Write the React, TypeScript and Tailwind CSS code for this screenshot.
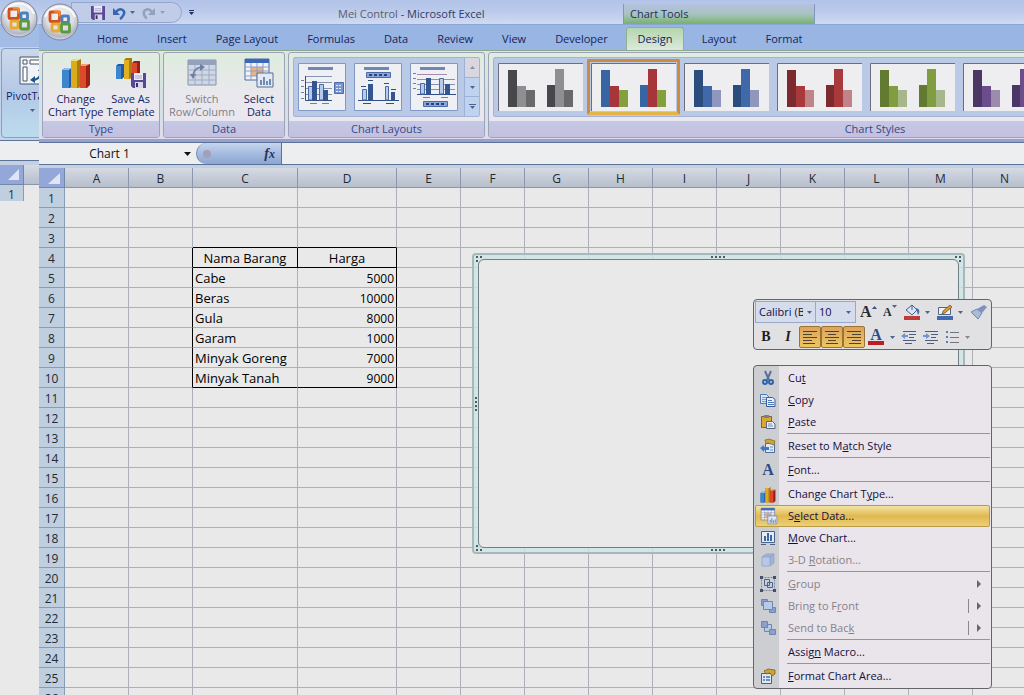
import type { ReactNode } from 'react'
import clsx from 'clsx'

const TABS = ['Home', 'Insert', 'Page Layout', 'Formulas', 'Data', 'Review', 'View', 'Developer']

const COLUMNS = [
  { name: 'A', width: 'w-16' },
  { name: 'B', width: 'w-16' },
  { name: 'C', width: 'w-[105px]' },
  { name: 'D', width: 'w-[99px]' },
  { name: 'E', width: 'w-16' },
  { name: 'F', width: 'w-16' },
  { name: 'G', width: 'w-16' },
  { name: 'H', width: 'w-16' },
  { name: 'I', width: 'w-16' },
  { name: 'J', width: 'w-16' },
  { name: 'K', width: 'w-16' },
  { name: 'L', width: 'w-16' },
  { name: 'M', width: 'w-16' },
  { name: 'N', width: 'w-16' },
]

const CELLS: Record<string, string> = {
  C4: 'Nama Barang', D4: 'Harga',
  C5: 'Cabe', D5: '5000',
  C6: 'Beras', D6: '10000',
  C7: 'Gula', D7: '8000',
  C8: 'Garam', D8: '1000',
  C9: 'Minyak Goreng', D9: '7000',
  C10: 'Minyak Tanah', D10: '9000',
}

const CHART_STYLES = [
  { name: 'Style 1', fills: ['#48474b', '#8f8f91', '#69696b'] },
  { name: 'Style 2', fills: ['#3765a4', '#a63639', '#83a03d'] },
  { name: 'Style 3', fills: ['#2a4d7e', '#3f69a8', '#8f97bd'] },
  { name: 'Style 4', fills: ['#7b2a2e', '#a8393d', '#c08387'] },
  { name: 'Style 5', fills: ['#637b31', '#819d42', '#a7b78b'] },
  { name: 'Style 6', fills: ['#4b3766', '#6c4d8c', '#9d8bae'] },
]

/* ---------- drawings ---------- */

function OfficeOrb() {
  return (
    <svg viewBox="0 0 38 38" className="size-[38px]" aria-hidden="true">
      <defs>
        <radialGradient id="orb" cx="50%" cy="35%" r="65%">
          <stop offset="0" stopColor="#f6f5f6" />
          <stop offset="0.6" stopColor="#dcdde3" />
          <stop offset="0.85" stopColor="#b3b7c2" />
          <stop offset="1" stopColor="#d5dae6" />
        </radialGradient>
      </defs>
      <circle cx="19" cy="19" r="18" fill="url(#orb)" stroke="#7c8498" />
      <path d="M4 14a16 16 0 0 1 30 0" fill="none" stroke="#f8f9fb" strokeWidth="2" />
      <path d="M16 16h6v6h-6z" fill="#f0d27c" />
      <g fill="none" strokeWidth="2.8">
        <rect x="9" y="9" width="9.500" height="9.500" rx="1" stroke="#d2501d" />
        <path d="M13 8.500h5.500v5" stroke="#ee8a34" strokeWidth="2" />
        <rect x="21" y="13" width="6.500" height="6.500" rx="1" stroke="#4a7fc0" />
        <rect x="11" y="21" width="7" height="7" rx="1" stroke="#e9a92e" />
        <rect x="20.500" y="21" width="8" height="8" rx="1" stroke="#5d9a3c" />
      </g>
    </svg>
  )
}

function Bars3D({ className }: { className: string }) {
  return (
    <svg viewBox="0 0 30 32" className={className} aria-hidden="true">
      <path d="M1 13l3-2h7v18l-2 2H1z" fill="#2458a0" />
      <path d="M1 13h7v18H1z" fill="#3c86cf" />
      <path d="M1 13l3-2h7l-3 2z" fill="#8dc0ea" />
      <path d="M10 4l3-2h7v27l-2 2h-8z" fill="#a97c10" />
      <path d="M10 4h6v27h-6z" fill="#dcab1b" />
      <path d="M10 4l3-2h7l-4 2z" fill="#f7de72" />
      <path d="M19 9l3-2h7v21l-3 3h-7z" fill="#9c1f14" />
      <path d="M19 9h6v22h-6z" fill="#db4a2b" />
      <path d="M19 9l3-2h7l-4 2z" fill="#f3a07e" />
    </svg>
  )
}

function Floppy({ x = 0, y = 0 }: { x?: number; y?: number }) {
  return (
    <g transform={`translate(${x} ${y})`}>
      <path d="M0 0h15v15H2l-2-2z" fill="#5a4796" />
      <path d="M3 0h9v7H3z" fill="#eceaf5" />
      <path d="M4 3h7M4 5h7" stroke="#a9a5cc" />
      <path d="M4 9h8v6H4z" fill="#d9d8ea" />
      <path d="M5 10h2v4H5z" fill="#3a2d74" />
    </g>
  )
}

function SaveTemplateIcon() {
  return (
    <svg viewBox="0 0 32 32" className="size-8" aria-hidden="true">
      <path d="M1 9l2-2h6v13l-2 2H1z" fill="#2458a0" />
      <path d="M1 9h5v13H1z" fill="#3c86cf" />
      <path d="M9 3l2-2h6v19l-2 2H9z" fill="#a97c10" />
      <path d="M9 3h5v19H9z" fill="#e0b020" />
      <path d="M17 6l2-2h6v15l-2 2h-6z" fill="#9c1f14" />
      <path d="M17 6h5v15h-5z" fill="#db4a2b" />
      <Floppy x={16} y={16} />
    </svg>
  )
}

function SwitchIcon() {
  return (
    <svg viewBox="0 0 32 32" className="size-8" aria-hidden="true">
      <path d="M2 3h28v25H2z" fill="#cfd6e6" stroke="#8893ab" />
      <path d="M2 3h28v5H2z" fill="#94a2bf" />
      <path d="M2 13h28M2 18h28M2 23h28M9 8v20M16 8v20M23 8v20" stroke="#a0abc2" />
      <path d="M7 20c0-6 3-9 8-10" fill="none" stroke="#6d7e9f" strokeWidth="1.500" />
      <path d="M14 7l5 3-5 4zM4 17h6l-3 5z" fill="#6d7e9f" />
    </svg>
  )
}

function SelectDataIcon({ className }: { className: string }) {
  return (
    <svg viewBox="0 0 32 32" className={className} aria-hidden="true">
      <path d="M2 2h24v21H2z" fill="#f2f2f6" stroke="#4c68a8" />
      <path d="M2 2h24v4H2z" fill="#3c66b8" />
      <path d="M8 10h12v9H8z" fill="#eeb27c" />
      <path d="M2 10h24M2 14h24M2 19h24M8 6v17M14 6v17M20 6v17" stroke="#8b9fc8" />
      <path d="M14 16h16v14H14z" fill="#e3e9f4" stroke="#5a6d92" />
      <path d="M18 23v5M21 20v8M24 24v4M27 22v6" stroke="#4a6aa5" strokeWidth="1.500" />
    </svg>
  )
}

function PivotIcon() {
  return (
    <svg viewBox="0 0 32 32" className="size-8 shrink-0" aria-hidden="true">
      <path d="M2 2h28v27H2z" fill="#f1f3f6" stroke="#44546c" />
      <path d="M5 5h4v4H5zM12 5h16v4H12zM5 12h4v14H5z" fill="#fff" stroke="#44546c" />
      <path d="M14 25c6 0 9-4 9-10" fill="none" stroke="#1f5488" strokeWidth="2" />
      <path d="M12 25l5-4v7zM20 16l3-5 4 5z" fill="#1f5488" />
    </svg>
  )
}

function LayoutThumb({ variant }: { variant: number }) {
  return (
    <svg viewBox="0 0 48 48" className="size-12" aria-hidden="true">
      <path d="M.5.5h47v47H.5z" fill="#eef0f4" stroke="#7f98c4" />
      <path d="M10 4h25v3H10z" fill="#7186b5" />
      {variant === 0 && (
        <>
          <path d="M7 13.500h27M7 19.500h27M7 25.500h27M7 31.500h27" stroke="#8793b0" />
          <path d="M7.500 13v24.500H34" fill="none" stroke="#304f86" />
          <path d="M3 17.500h3M3 23.500h3M3 29.500h3M3 35.500h3M12 40.500h7M24 40.500h7" stroke="#6f7fa6" />
          <path d="M10.500 23.500h4V37h-4zM21.500 21.500h4V37h-4z" fill="#b7caec" stroke="#4b6ba6" />
          <path d="M14 18h5v19h-5zM25 27h5v10h-5z" fill="#345690" />
          <path d="M36.500 19.500h9v11h-9z" fill="#7a96d0" stroke="#4b6ba6" />
          <path d="M38 22.500h6M38 25.500h6M38 28.500h6" stroke="#e9eef8" strokeDasharray="2 1" />
        </>
      )}
      {variant === 1 && (
        <>
          <path d="M12.500 9.500h24v5h-24z" fill="#8ba5da" stroke="#4b6ba6" />
          <path d="M15 12h20" stroke="#25447c" strokeWidth="2" strokeDasharray="3 2" />
          <path d="M4 37.500h41" stroke="#304f86" />
          <path d="M8.500 26.500h4V37h-4zM31.500 23.500h3V37h-3z" fill="#b7caec" stroke="#4b6ba6" />
          <path d="M14 21h5v16h-5zM37 29h4v8h-4z" fill="#345690" />
          <path d="M7 23.500h5M14 17.500h5M30 20.500h5M37 26.500h5M9 40.500h8M32 40.500h8" stroke="#304f86" />
        </>
      )}
      {variant === 2 && (
        <>
          <path d="M7 11.500h30" stroke="#a58bb0" />
          <path d="M7 16.500h38M7 21.500h38M7 26.500h38" stroke="#8793b0" />
          <path d="M7 31.500h39" stroke="#304f86" />
          <path d="M3 10.500h3M3 15.500h3M3 20.500h3M3 25.500h3M13 34.500h7M31 34.500h7" stroke="#6f7fa6" />
          <path d="M10.500 20.500h4V31h-4zM29.500 15.500h4V31h-4z" fill="#b7caec" stroke="#4b6ba6" />
          <path d="M16 15h5v16h-5zM35 21h5v10h-5z" fill="#345690" />
          <path d="M13.500 38.500h24v5h-24z" fill="#8ba5da" stroke="#4b6ba6" />
          <path d="M16 41h20" stroke="#25447c" strokeWidth="2" strokeDasharray="3 2" />
        </>
      )}
    </svg>
  )
}

function StyleThumb({ fills }: { fills: string[] }) {
  const [a, b, c] = fills
  return (
    <svg viewBox="0 0 85 48" className="h-12 w-[85px]" aria-hidden="true">
      <path d="M0 0h85v48H0z" fill="#eeeef0" />
      <path d="M.5 48V.5H85" fill="none" stroke="#68707e" />
      <path d="M10 7h9v37h-9zM49 22h8v22h-8z" fill={a} />
      <path d="M19 23h9v21h-9zM57 6h9v38h-9z" fill={b} />
      <path d="M28 27h9v17h-9zM66 27h9v17h-9z" fill={c} />
    </svg>
  )
}

function Caret({ className = 'text-[#4a668f]' }: { className?: string }) {
  return (
    <svg viewBox="0 0 5 3" className={clsx('h-[3px] w-[5px] shrink-0', className)} aria-hidden="true">
      <path d="M0 0h5L2.500 3z" fill="currentColor" />
    </svg>
  )
}

function Icon16({ children }: { children?: ReactNode }) {
  return (
    <svg viewBox="0 0 16 16" className="size-4 shrink-0" aria-hidden="true">
      {children}
    </svg>
  )
}

const CutIcon = (
  <Icon16>
    <path d="M5 1l4 9M11 1L7 10" stroke="#56719f" strokeWidth="2" />
    <circle cx="5" cy="12" r="2" fill="none" stroke="#2f62ac" strokeWidth="2" />
    <circle cx="11" cy="12" r="2" fill="none" stroke="#2f62ac" strokeWidth="2" />
  </Icon16>
)
const CopyIcon = (
  <Icon16>
    <path d="M.5 2.500h6l2 2v7h-8z" fill="#d7e4f6" stroke="#5377b4" />
    <path d="M2 5.500h4M2 7.500h4M2 9.500h4" stroke="#7d9bcd" />
    <path d="M6.500 5.500h6l2.500 2v7H6.500z" fill="#e6effb" stroke="#345c9f" />
    <path d="M8 8.500h4M8 10.500h6M8 12.500h6" stroke="#4f79ba" />
  </Icon16>
)
const PasteIcon = (
  <Icon16>
    <path d="M1.500 2.500h10v11h-10z" fill="#dca632" stroke="#8a6115" />
    <path d="M4 1h5v3H4z" fill="#7c7f88" />
    <path d="M6.500 7.500h6l2.500 2.500v4.500H6.500z" fill="#e8edf7" stroke="#55647f" />
    <path d="M8 10h4M8 12h5" stroke="#7a8aa8" />
  </Icon16>
)
const ResetIcon = (
  <Icon16>
    <path d="M5.500 5.500h9v9h-9z" fill="#dde8f8" stroke="#4b6ba6" />
    <path d="M5 2l4-1 6 2-1 4-3-1-3-1-2 1z" fill="#c8a536" stroke="#7d6722" strokeWidth=".7" />
    <path d="M0 10l4-3v2h5v3H4v2z" fill="#3c79cb" />
    <path d="M10 9h3M10 12h3" stroke="#7a8aa8" />
  </Icon16>
)
const FontIcon = (
  <span className="w-4 text-center font-['Liberation_Serif',serif] text-base font-bold leading-4 text-[#294c86]">A</span>
)
const MoveIcon = (
  <Icon16>
    <path d="M1.500 1.500h13v11h-13z" fill="#e3ebf6" stroke="#4b6086" />
    <path d="M4 6h2v5H4zM7 3h2v8H7zM10 5h2v6h-2z" fill="#3f66a4" />
    <path d="M1 14.500h5M10 14.500h5" stroke="#4b6086" />
  </Icon16>
)
const RotateIcon = (
  <Icon16>
    <path d="M2 5l4-3h8v9l-4 3H2z" fill="#9fb3d6" />
    <path d="M2 5h8v9H2z" fill="#b8c8e4" />
    <path d="M2 5h8v9H2zM2 5l4-3h8v9l-4 3M10 5l4-3" fill="none" stroke="#899ec5" strokeWidth=".7" />
  </Icon16>
)
const GroupIcon = (
  <Icon16>
    <path d="M1.500 1.500h13v13h-13z" fill="none" stroke="#7d8ca6" strokeDasharray="2 1" />
    <path d="M4.500 3.500h5v6h-5zM7.500 6.500h5v5h-5z" fill="#c5d0e4" stroke="#4e6288" />
    <path d="M0 0h3v3H0zM13 0h3v3h-3zM0 13h3v3H0zM13 13h3v3h-3z" fill="#40516e" />
  </Icon16>
)
const FrontIcon = (
  <Icon16>
    <path d="M1.500 1.500h6v6h-6zM9.500 9.500h6v5h-6z" fill="#8ba0c8" stroke="#6f86b5" />
    <path d="M3.500 3.500h9v8h-9z" fill="#b9c9e6" stroke="#6f86b5" />
  </Icon16>
)
const BackIcon = (
  <Icon16>
    <path d="M4.500 4.500h7v7h-7z" fill="#b9c9e6" stroke="#6f86b5" />
    <path d="M1.500 1.500h6v6h-6zM9.500 9.500h6v5h-6z" fill="#8ba0c8" stroke="#6f86b5" />
  </Icon16>
)
const FormatIcon = (
  <Icon16>
    <path d="M1.500 5.500h10v10h-10z" fill="#dfe7f3" stroke="#4d5f80" />
    <path d="M3 9h2M6 9h4M3 12h2M6 12h4" stroke="#4b74b5" strokeWidth="1.500" />
    <path d="M4 3l4-2 7 1v4l-3 2-2-3-4 1z" fill="#c8a536" stroke="#6d5716" strokeWidth=".7" />
  </Icon16>
)

/* ---------- context menu ---------- */

interface MenuEntry {
  // [before, accelerator, after]
  label: [string, string, string]
  icon?: ReactNode
  disabled?: boolean
  submenu?: boolean
  split?: boolean
  active?: boolean
  divider?: boolean
}

const MENU: MenuEntry[] = [
  { label: ['Cu', 't', ''], icon: CutIcon },
  { label: ['', 'C', 'opy'], icon: CopyIcon },
  { label: ['', 'P', 'aste'], icon: PasteIcon, divider: true },
  { label: ['Reset to M', 'a', 'tch Style'], icon: ResetIcon, divider: true },
  { label: ['', 'F', 'ont...'], icon: FontIcon, divider: true },
  { label: ['Change Chart T', 'y', 'pe...'], icon: <Bars3D className="h-[17px] w-4" /> },
  { label: ['S', 'e', 'lect Data...'], icon: <SelectDataIcon className="size-[18px]" />, active: true },
  { label: ['', 'M', 'ove Chart...'], icon: MoveIcon },
  { label: ['3-D ', 'R', 'otation...'], icon: RotateIcon, disabled: true, divider: true },
  { label: ['', 'G', 'roup'], icon: GroupIcon, disabled: true, submenu: true },
  { label: ['Bring to F', 'r', 'ont'], icon: FrontIcon, disabled: true, submenu: true, split: true },
  { label: ['Send to Bac', 'k', ''], icon: BackIcon, disabled: true, submenu: true, split: true, divider: true },
  { label: ['Assig', 'n', ' Macro...'], divider: true },
  { label: ['', 'F', 'ormat Chart Area...'], icon: FormatIcon },
]

function ContextMenu() {
  return (
    <div
      role="menu"
      className="absolute left-[714px] top-[197px] w-[239px] rounded-sm border border-[#63656b] bg-linear-to-r from-[#cdced2] from-[25px] to-[#eae4eb] to-[25px] p-px"
    >
      {MENU.map((item) => (
        <div key={item.label.join('')}>
          <button
            role="menuitem"
            disabled={item.disabled}
            className={clsx(
              'flex h-[22px] w-full items-center rounded-xs border px-1 text-left',
              item.active
                ? 'border-[#b99a45] bg-linear-to-b from-[#f3e4a4] via-[#e0b84e] to-[#ecd07a]'
                : 'border-transparent',
              item.disabled ? 'text-[#85838a]' : 'text-[#140f40]'
            )}
          >
            <span className="flex w-7 shrink-0 items-center">{item.icon}</span>
            <span className="grow">
              {item.label[0]}
              <u>{item.label[1]}</u>
              {item.label[2]}
            </span>
            {item.split && <span className="mr-2 h-[14px] border-l border-[#8b8990]" />}
            {item.submenu && (
              <svg viewBox="0 0 4 8" className="mr-1 h-2 w-1" aria-hidden="true">
                <path d="M0 0l4 4-4 4z" fill="#66666c" />
              </svg>
            )}
          </button>
          {item.divider && <div className="ml-8 h-[2px] border-t border-[#96949c]" />}
        </div>
      ))}
    </div>
  )
}

/* ---------- mini toolbar ---------- */

function AlignButton({ label, d }: { label: string; d: string }) {
  return (
    <button aria-label={label} className="flex h-[22px] w-[22px] items-center justify-center rounded-xs border border-[#9a7436] bg-linear-to-b from-[#dba45c] to-[#eec560]">
      <Icon16>
        <path d={d} stroke="#4d4335" />
      </Icon16>
    </button>
  )
}

function MiniToolbar() {
  return (
    <div className="absolute left-[714px] top-[131px] flex w-[239px] flex-col gap-[3px] rounded-sm border border-[#63656b] bg-[#e1e1e3] p-px">
      <div className="flex h-[22px] items-center">
        <div className="relative flex h-[22px] w-[61px] items-center border border-[#98a9cb] bg-[#d5dcec]">
          <select aria-label="Font" className="w-[47px] appearance-none overflow-hidden pl-[3px] text-[#140f40]">
            <option>Calibri (Body)</option>
          </select>
          <span className="ml-1"><Caret /></span>
        </div>
        <div className="flex h-[22px] w-10 items-center border border-l-0 border-[#98a9cb] bg-[#d5dcec]">
          <select aria-label="Font size" className="w-[30px] appearance-none pl-[3px] text-[#140f40]">
            <option>10</option>
          </select>
          <Caret />
        </div>
        <button aria-label="Grow font" className="ml-1 flex w-5 font-['Liberation_Serif',serif] text-base font-bold leading-5 text-[#2b2b30]">
          A
          <svg viewBox="0 0 5 3" className="mt-1 h-[3px] w-[5px]" aria-hidden="true"><path d="M0 3h5L2.500 0z" fill="#35507f" /></svg>
        </button>
        <button aria-label="Shrink font" className="ml-[3px] flex w-5 items-end font-['Liberation_Serif',serif] text-xs font-bold leading-4 text-[#2b2b30]">
          A
          <span className="mb-3"><Caret /></span>
        </button>
        <button aria-label="Fill color" className="flex items-center gap-1">
          <svg viewBox="0 0 18 16" className="h-4 w-[18px]" aria-hidden="true">
            <path d="M3 6l6-5 5 5-5 5z" fill="#dbe4f3" stroke="#44608f" />
            <path d="M9 1v5" stroke="#44608f" />
            <path d="M13 4c4 1 4 4 2 7z" fill="#3f6cb0" />
            <path d="M1 12h16v4H1z" fill="#bf3b3a" />
          </svg>
          <Caret />
        </button>
        <button aria-label="Outline color" className="ml-[6px] flex items-center gap-1">
          <svg viewBox="0 0 18 16" className="h-4 w-[18px]" aria-hidden="true">
            <path d="M2.500 3.500h12v7h-12z" fill="#f0f0f2" stroke="#55647f" />
            <path d="M6 10l1-3 7-6 2 2-7 6z" fill="#d59a3d" stroke="#6d4c18" strokeWidth=".7" />
            <path d="M1 12h16v4H1z" fill="#3f6cb0" />
          </svg>
          <Caret />
        </button>
        <button aria-label="Format painter" className="ml-2">
          <Icon16>
            <path d="M0 8l6-3 5 4-4 6z" fill="#a9bbd9" stroke="#7088b3" />
            <path d="M6 5l7-4 3 2-5 6z" fill="#7c93be" />
          </Icon16>
        </button>
      </div>
      <div className="flex h-[22px] items-center font-['Liberation_Serif',serif] text-sm text-[#1d1d22]">
        <button className="w-[22px] font-bold">B</button>
        <button className="w-[22px] font-bold italic">I</button>
        <AlignButton label="Align left" d="M1 2.500h14M1 5.500h9M1 8.500h14M1 11.500h9M1 14.500h12" />
        <AlignButton label="Center" d="M1 2.500h14M4 5.500h8M1 8.500h14M4 11.500h8M2 14.500h12" />
        <AlignButton label="Align right" d="M1 2.500h14M6 5.500h9M1 8.500h14M6 11.500h9M3 14.500h12" />
        <button aria-label="Font color" className="ml-[3px] flex items-center gap-[6px]">
          <span className="h-4 w-4 border-b-4 border-[#bb1e22] text-center text-base font-bold leading-3 text-[#2c4c86]">A</span>
          <Caret />
        </button>
        <span className="ml-[6px] flex items-center gap-[6px]">
          <button aria-label="Decrease indent">
            <Icon16>
              <path d="M2 2.500h13M8 5.500h7M8 8.500h5M2 11.500h13M4 14.500h7" stroke="#4d5c7c" />
              <path d="M0 7l4-3v6zM4 6h3v2H4z" fill="#6f94cf" />
            </Icon16>
          </button>
          <button aria-label="Increase indent">
            <Icon16>
              <path d="M2 2.500h13M8 5.500h7M8 8.500h5M2 11.500h13M4 14.500h7" stroke="#4d5c7c" />
              <path d="M7 7L3 4v6zM0 6h3v2H0z" fill="#6f94cf" />
            </Icon16>
          </button>
          <button aria-label="Bullets" className="flex items-center gap-1">
            <Icon16>
              <path d="M1 2h2v2H1zM1 7h2v2H1zM1 12h2v2H1z" fill="#5b7db5" />
              <path d="M5 3.500h9M5 8.500h9M5 13.500h9" stroke="#72757e" />
            </Icon16>
            <Caret className="text-[#85868c]" />
          </button>
        </span>
      </div>
    </div>
  )
}

/* ---------- ribbon ---------- */

function RibbonGroup({ title, className, children }: { title: string; className?: string; children: ReactNode }) {
  return (
    <section
      aria-label={title}
      className={clsx(
        'flex h-[86px] flex-col overflow-hidden rounded-[3px] border border-[#9ba3b8] bg-linear-to-b from-[#dfecde] via-[#e9e8ee] to-[#ece6f0]',
        className
      )}
    >
      <div className="flex h-[68px] items-start px-1 pt-1">{children}</div>
      <h2 className="flex h-4 shrink-0 items-center justify-center bg-linear-to-b from-[#c3cae4] to-[#c5bfe0] text-[#34488a]">{title}</h2>
    </section>
  )
}

function BigButton({ icon, lines, disabled }: { icon: ReactNode; lines: [string, string]; disabled?: boolean }) {
  return (
    <button
      disabled={disabled}
      className={clsx('flex flex-col items-center whitespace-nowrap px-px leading-[13px]', disabled ? 'text-[#7f7e84]' : 'text-[#16235c]')}
    >
      <span className="mb-[3px] flex h-8 items-center">{icon}</span>
      <span>{lines[0]}</span>
      <span>{lines[1]}</span>
    </button>
  )
}

function Ribbon() {
  return (
    <div className="flex h-[89px] shrink-0 gap-[3px] overflow-hidden border-t border-[#8fa98f] bg-linear-to-b from-[#dbe9dc] via-[#d5e2e4] to-[#dcdcec] pl-[3px] pt-px">
      <RibbonGroup title="Type" className="w-[118px] shrink-0">
        <div className="flex gap-px">
          <BigButton icon={<Bars3D className="h-8 w-[30px]" />} lines={['Change', 'Chart Type']} />
          <BigButton icon={<SaveTemplateIcon />} lines={['Save As', 'Template']} />
        </div>
      </RibbonGroup>
      <RibbonGroup title="Data" className="w-[122px] shrink-0">
        <div className="flex gap-[6px]">
          <BigButton icon={<SwitchIcon />} lines={['Switch', 'Row/Column']} disabled />
          <BigButton icon={<SelectDataIcon className="size-8" />} lines={['Select', 'Data']} />
        </div>
      </RibbonGroup>
      <RibbonGroup title="Chart Layouts" className="w-[197px] shrink-0">
        <div className="flex h-[60px] w-full rounded-xs border border-[#a2b4d8] bg-[#b9c9e6]">
          <div className="flex grow items-center gap-2 pl-1">
            {[0, 1, 2].map((v) => (
              <button key={v} aria-label={`Layout ${v + 1}`}>
                <LayoutThumb variant={v} />
              </button>
            ))}
          </div>
          <div className="flex w-[15px] flex-col border-l border-[#9db1d8]">
            <button aria-label="Scroll up" className="flex flex-1 items-center justify-center bg-[#d8d6de]">
              <svg viewBox="0 0 5 3" className="h-[3px] w-[5px]" aria-hidden="true"><path d="M0 3h5L2.500 0z" fill="#8d8f98" /></svg>
            </button>
            <button aria-label="Scroll down" className="flex flex-1 items-center justify-center border-y border-[#9db1d8] bg-[#bfd2ee]"><Caret /></button>
            <button aria-label="More layouts" className="flex flex-1 flex-col items-center justify-center gap-px bg-[#bfd2ee]">
              <span className="w-[7px] border-t border-[#4a668f]" />
              <Caret />
            </button>
          </div>
        </div>
      </RibbonGroup>
      <RibbonGroup title="Chart Styles" className="min-w-[774px] grow">
        <div className="flex h-[60px] w-full items-center rounded-xs border border-[#a2b4d8] bg-[#b9c9e6]">
          {CHART_STYLES.map((style, i) => (
            <button
              key={style.name}
              aria-label={style.name}
              className={clsx(
                'flex h-14 w-[93px] shrink-0 items-center justify-center',
                i === 1 && 'rounded-xs border-3 border-[#cf8a42] border-b-[#e3b448]'
              )}
            >
              <StyleThumb fills={style.fills} />
            </button>
          ))}
        </div>
      </RibbonGroup>
    </div>
  )
}

/* ---------- title bar, tabs and formula bar ---------- */

function TitleBar() {
  return (
    <header className="flex h-[25px] shrink-0 border-b border-[#8ba6d5] bg-linear-to-b from-[#b1c3e8] via-[#bccbec] to-[#d0daf1]">
      <div className="flex w-[584px] shrink-0 items-start pl-8">
        <div className="mt-[2px] flex h-[21px] w-[111px] items-center gap-[7px] rounded-r-full border border-[#93a6ce] bg-[#c0cce8] pl-[19px]">
          <button aria-label="Save">
            <svg viewBox="0 0 15 15" className="size-[14px]" aria-hidden="true"><Floppy /></svg>
          </button>
          <button aria-label="Undo" className="flex items-center gap-1">
            <svg viewBox="0 0 14 14" className="size-[14px]" aria-hidden="true">
              <path d="M4 6c4-5 9-2 8 2-1 2-2 4-4 5" fill="none" stroke="#3565b3" strokeWidth="2.500" />
              <path d="M1 2v7h7z" fill="#3565b3" />
            </svg>
            <Caret />
          </button>
          <button aria-label="Redo" className="flex items-center gap-1">
            <svg viewBox="0 0 14 14" className="size-[14px]" aria-hidden="true">
              <path d="M10 6c-4-5-9-2-8 2 0 2 2 4 3 4" fill="none" stroke="#93a0bd" strokeWidth="2.500" />
              <path d="M13 2v7H6z" fill="#93a0bd" />
            </svg>
            <Caret className="text-[#93a0bd]" />
          </button>
        </div>
        <button aria-label="Customize Quick Access Toolbar" className="ml-[7px] mt-[10px] flex flex-col items-center gap-px">
          <span className="w-[5px] border-t border-[#1e2c66]" />
          <Caret className="text-[#1e2c66]" />
        </button>
        <h1 className="grow pl-36 pt-[6px] text-[#2f3c66]">
          <span className="text-[#5b5d68]">Mei Control</span> - Microsoft Excel
        </h1>
      </div>
      <div className="mt-1 h-5 w-48 shrink-0 border-x border-[#8296c0] bg-linear-to-b from-[#b3c1e2] via-[#a8c3bf] to-[#77b268] pl-[6px] pt-[2px] text-[#1e2c66]">
        Chart Tools
      </div>
    </header>
  )
}

function TabStrip() {
  const tab = 'h-[23px] rounded-t-[3px] border border-b-0 text-center'
  return (
    <nav aria-label="Ribbon tabs" className="flex h-[25px] shrink-0 items-end bg-[#98b5e3] text-[#16235c]">
      <div className="flex w-[584px] shrink-0 gap-px pl-11">
        {TABS.map((name) => (
          <button key={name} className={clsx(tab, 'border-transparent px-[13px]')}>{name}</button>
        ))}
      </div>
      <div className="flex w-48 shrink-0 pl-[3px]">
        <button className={clsx(tab, 'w-[58px] border-[#8fb08f] bg-linear-to-b from-[#b4d6ae] to-[#dbe9dc]')}>Design</button>
        <button className={clsx(tab, 'w-[70px] border-transparent')}>Layout</button>
        <button className={clsx(tab, 'w-[60px] border-transparent')}>Format</button>
      </div>
    </nav>
  )
}

function FormulaBar() {
  return (
    <div className="shrink-0 border-y-[3px] border-t-[#9a9fcd] border-b-[#c5cfe2]">
      <div className="flex h-[23px] border-y border-[#5b7396] bg-[#eceef0]">
        <div className="flex w-[157px] items-center pr-[5px]">
          <input
            aria-label="Name box"
            defaultValue="Chart 1"
            className="w-0 grow pr-1 text-center text-xs text-[#111]"
          />
          <svg viewBox="0 0 7 4" className="h-1 w-[7px]" aria-hidden="true"><path d="M0 0h7L3.500 4z" fill="#111" /></svg>
        </div>
        <div className="flex w-[85px] items-center rounded-l-full border-l border-[#6f86ad] bg-linear-to-b from-[#c6d5ee] via-[#a5bbe0] to-[#8ba6d3] pl-[6px] pr-[6px]">
          <span className="size-2 rounded-full bg-[#a49fb6]" />
          <button
            aria-label="Insert function"
            className="ml-auto font-['Liberation_Serif',serif] text-sm font-bold italic leading-5 text-[#2b3350]"
          >
            f<span className="text-xs">x</span>
          </button>
        </div>
        <input aria-label="Formula" className="min-w-0 grow border-l border-[#5b7396]" />
      </div>
    </div>
  )
}

/* ---------- sheet ---------- */

function cellClass(col: string, row: number) {
  const inTable = row >= 4 && row <= 10
  const blackRight = (inTable && (col === 'B' || col === 'D')) || (row === 4 && col === 'C')
  const blackBottom = (col === 'C' || col === 'D') && (row === 3 || row === 4 || row === 10)
  return clsx(
    'h-5 overflow-hidden whitespace-nowrap border-b border-r px-[2px] pb-0 pt-[2px] text-black',
    blackRight ? 'border-r-black' : 'border-r-[#adafba]',
    blackBottom ? 'border-b-black' : 'border-b-[#adafba]',
    row === 4 && 'text-center text-[13px]',
    row !== 4 && col === 'D' && 'text-right text-xs',
    row !== 4 && col !== 'D' && 'text-[13px]'
  )
}

function Sheet() {
  const rows = Array.from({ length: 26 }, (_, i) => i + 1)
  return (
    <table className="w-max table-fixed border-separate border-spacing-0 leading-[17px] text-[#1f2a33]">
      <thead className="text-xs">
        <tr>
          <th className="h-5 w-[26px] border-b border-r border-[#7188a8] bg-[#93a8d8] p-0">
            <svg viewBox="0 0 25 18" className="ml-auto h-[18px] w-[25px]" aria-label="Select all">
              <path d="M21 4v11H9z" fill="#dfe5f2" />
            </svg>
          </th>
          {COLUMNS.map((c) => (
            <th
              key={c.name}
              scope="col"
              className={clsx('h-5 border-b border-r border-[#8a97ad] bg-linear-to-b from-[#d5dae3] to-[#b7bfcd] px-0 pb-0 pt-[2px] font-normal', c.width)}
            >
              {c.name}
            </th>
          ))}
        </tr>
      </thead>
      <tbody>
        {rows.map((row) => (
          <tr key={row}>
            <th scope="row" className="h-5 border-b border-r border-[#869db8] bg-[#bfcfdf] px-0 pb-0 pt-[2px] text-xs font-normal">
              {row}
            </th>
            {COLUMNS.map((c) => (
              <td key={c.name} className={cellClass(c.name, row)}>
                {CELLS[`${c.name}${row}`]}
              </td>
            ))}
          </tr>
        ))}
      </tbody>
    </table>
  )
}

function Dots({ className }: { className: string }) {
  return (
    <svg viewBox="0 0 14 2" className={clsx('absolute h-[2px] w-[14px]', className)} aria-hidden="true">
      <path d="M0 0h2v2H0zM4 0h2v2H4zM8 0h2v2H8zM12 0h2v2h-2z" fill="#4c5c62" />
    </svg>
  )
}

function CornerDots({ className }: { className: string }) {
  return (
    <svg viewBox="0 0 6 6" className={clsx('absolute size-[6px]', className)} aria-hidden="true">
      <path d="M0 0h2v2H0zM4 0h2v2H4zM0 4h2v2H0z" fill="#4c5c62" />
    </svg>
  )
}

// Empty chart area, still waiting for its data source
function ChartFrame() {
  return (
    <div className="absolute left-[433px] top-[85px] h-[301px] w-[493px] rounded border-2 border-[#a5b8bb] bg-[#cde3e3]/80 p-1">
      <div className="size-full rounded-md border border-[#6f8084] bg-[#e9e9e9]" />
      <Dots className="left-[237px] top-px" />
      <Dots className="bottom-px left-[237px]" />
      <Dots className="-left-[5px] top-[148px] rotate-90" />
      <CornerDots className="left-[2px] top-px" />
      <CornerDots className="right-[2px] top-px rotate-90" />
      <CornerDots className="bottom-px left-[2px] -rotate-90" />
    </div>
  )
}

/* ---------- second Excel window peeking out on the left ---------- */

function BackWindow() {
  return (
    <aside aria-label="Background window" className="relative w-[39px] shrink-0 overflow-hidden">
      <div className="h-[25px] border-b border-[#9fb4dc] bg-linear-to-b from-[#b1c3e8] to-[#c9d5ef]" />
      <div className="h-[22px] bg-[#a3bce5]" />
      <div className="h-[93px] bg-[#c2d3ea] pb-[2px] pl-px pt-px">
        <button className="flex h-[90px] w-16 flex-col items-start rounded border border-[#869fc4] bg-linear-to-b from-[#cbd8ea] via-[#b4c8e6] to-[#bcdcee] pl-1 pt-[6px] text-[#16235c]">
          <span className="pl-3"><PivotIcon /></span>
          <span className="leading-[18px]">PivotTable</span>
          <span className="ml-6 mt-1"><Caret /></span>
        </button>
      </div>
      <div className="h-[21px] border-y border-[#5b7396] bg-[#eceef0]" />
      <div className="h-1 bg-[#c5cfe2]" />
      <div className="flex h-5">
        <div className="w-6 border-b border-r border-[#7188a8] bg-[#93a8d8]">
          <svg viewBox="0 0 23 19" className="h-[19px] w-[23px]" aria-hidden="true">
            <path d="M19 4v11H8z" fill="#dfe5f2" />
          </svg>
        </div>
        <div className="grow border-b border-[#8a97ad] bg-linear-to-b from-[#d5dae3] to-[#b7bfcd]" />
      </div>
      <div className="h-4 w-6 border-r border-[#869db8] bg-[#bfcfdf] text-center text-xs leading-5 text-[#26323c]">1</div>
      <div className="absolute left-0 top-0"><OfficeOrb /></div>
    </aside>
  )
}

export default function App() {
  return (
    <div className="relative flex h-screen overflow-hidden bg-[#e9e9e9] font-['Open_Sans','Noto_Sans',sans-serif] text-[11px] leading-4">
      <BackWindow />
      <main className="flex min-w-0 grow flex-col overflow-hidden">
        <TitleBar />
        <TabStrip />
        <Ribbon />
        <FormulaBar />
        <div className="relative min-h-0 flex-1 overflow-hidden">
          <Sheet />
          <ChartFrame />
          <MiniToolbar />
          <ContextMenu />
        </div>
      </main>
      <button aria-label="Office button" className="absolute left-[41px] top-[3px]">
        <OfficeOrb />
      </button>
    </div>
  )
}
